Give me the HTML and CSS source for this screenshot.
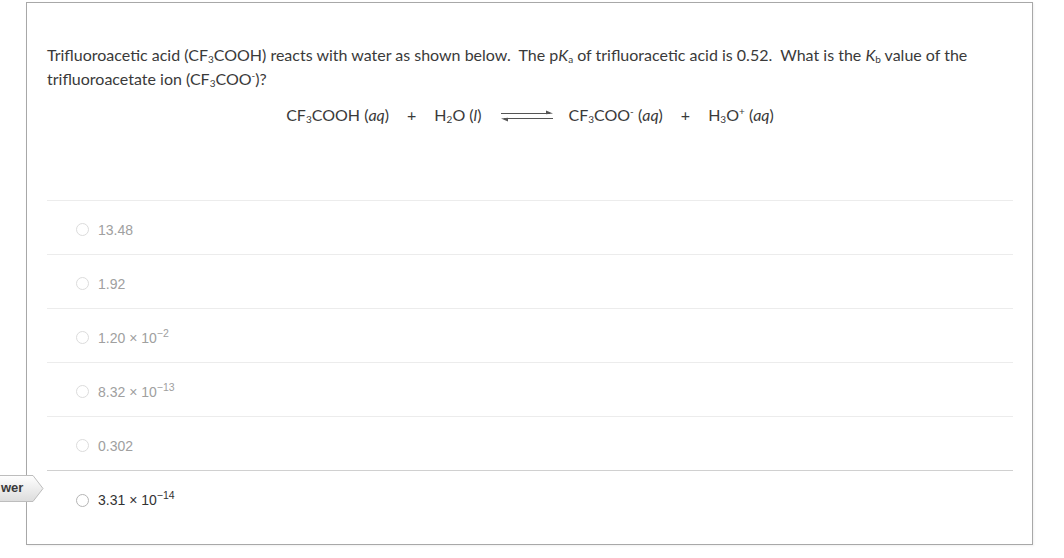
FILE: index.html
```html
<!DOCTYPE html>
<html>
<head>
<meta charset="utf-8">
<link rel="stylesheet" href="styles.css">
</head>
<body>
<div class="tab"><svg class="tab-shape" width="44" height="28" viewBox="0 0 44 28"><defs><linearGradient id="g" x1="0" y1="0" x2="0" y2="1"><stop offset="0" stop-color="#ffffff"/><stop offset="1" stop-color="#dcdcdc"/></linearGradient></defs><polygon points="-2,0.5 33,0.5 43,13.5 33,26.5 -2,26.5" fill="url(#g)" stroke="#bdbdbd" stroke-width="1"/></svg><span class="tab-label">wer</span></div>
<div class="card">
  <p class="question">Trifluoroacetic acid (CF<sub>3</sub>COOH) reacts with water as shown below.&nbsp; The p<i>K</i><sub>a</sub> of trifluoracetic acid is 0.52.&nbsp; What is the <i>K</i><sub>b</sub> value of the trifluoroacetate ion (CF<sub>3</sub>COO<sup>-</sup>)?</p>
  <div class="equation">
    <span>CF<sub>3</sub>COOH (<i>aq</i>)</span>
    <span class="plus">+</span>
    <span>H<sub>2</sub>O (<i>l</i>)</span>
    <svg class="arrow" width="54" height="12" viewBox="0 0 54 12"><line x1="1" y1="3.5" x2="50" y2="3.5" stroke="#555" stroke-width="1.2"/><polygon points="46,0.5 53,3.5 46,4.2" fill="#555"/><line x1="4" y1="8.5" x2="53" y2="8.5" stroke="#555" stroke-width="1.2"/><polygon points="8,7.8 1,8.5 8,11.5" fill="#555"/></svg>
    <span>CF<sub>3</sub>COO<sup>-</sup> (<i>aq</i>)</span>
    <span class="plus">+</span>
    <span>H<sub>3</sub>O<sup>+</sup> (<i>aq</i>)</span>
  </div>
  <ul class="options">
    <li class="option faded"><span class="radio"></span><span>13.48</span></li>
    <li class="option faded"><span class="radio"></span><span>1.92</span></li>
    <li class="option faded"><span class="radio"></span><span>1.20 × 10<sup>−2</sup></span></li>
    <li class="option faded"><span class="radio"></span><span>8.32 × 10<sup>−13</sup></span></li>
    <li class="option faded"><span class="radio"></span><span>0.302</span></li>
    <li class="option active"><span class="radio"></span><span>3.31 × 10<sup>−14</sup></span></li>
  </ul>
</div>
</body>
</html>
```

FILE: styles.css
```css
html, body {
  margin: 0;
  padding: 0;
  background: #ffffff;
}
body {
  position: relative;
  width: 1064px;
  height: 558px;
  overflow: hidden;
  font-family: Lato, "Liberation Sans", sans-serif;
  color: #333;
}
.card {
  box-sizing: border-box;
  margin: 2px 0 0 26px;
  width: 1007px;
  height: 543px;
  border: 1px solid #a8a8a8;
  box-shadow: 1px 1px 2px rgba(0,0,0,0.06);
  padding: 40px 19px 0 20px;
}
.question {
  margin: 0;
  font-size: 16px;
  line-height: 24px;
  color: #3a3a3a;
  padding-right: 20px;
}
.question sub, .equation sub {
  font-size: 10px;
  vertical-align: -2px;
  line-height: 0;
}
.question sup, .equation sup {
  font-size: 10px;
  vertical-align: 6px;
  line-height: 0;
}
.equation {
  margin-top: 12px;
  display: flex;
  justify-content: center;
  align-items: center;
  font-size: 16px;
  line-height: 24px;
  color: #3a3a3a;
}
.equation .plus {
  margin: 0 18px;
}
.equation .arrow {
  margin: 0 14px 0 19px;
  position: relative;
  top: 1px;
}
.options {
  list-style: none;
  margin: 73px 0 0 0;
  padding: 0;
}
.option {
  display: flex;
  align-items: center;
  border-top: 1px solid #ececec;
  padding: 4px 0 0 29px;
  box-sizing: border-box;
  height: 54px;
  font-family: "Liberation Sans", Arial, sans-serif;
  font-size: 14px;
}
.option sup {
  font-size: 10.5px;
  vertical-align: 6px;
  line-height: 0;
}
.radio {
  display: inline-block;
  width: 11px;
  height: 11px;
  border: 1px solid #dcdcdc;
  border-radius: 50%;
  margin-right: 9px;
  background: #fff;
}
.faded {
  color: #a0a0a0;
}
.active {
  color: #333;
  border-top-color: #d0d0d0;
  padding-top: 5px;
}
.active .radio {
  border-color: #b5b5b5;
}
.tab {
  position: absolute;
  left: 0;
  top: 475px;
  width: 44px;
  height: 28px;
}
.tab-shape {
  position: absolute;
  left: 0;
  top: 0;
}
.tab-label {
  position: absolute;
  left: 1px;
  top: 5px;
  font-family: "Liberation Sans", Arial, sans-serif;
  font-size: 13px;
  font-weight: bold;
  color: #3a3a3a;
}
```
